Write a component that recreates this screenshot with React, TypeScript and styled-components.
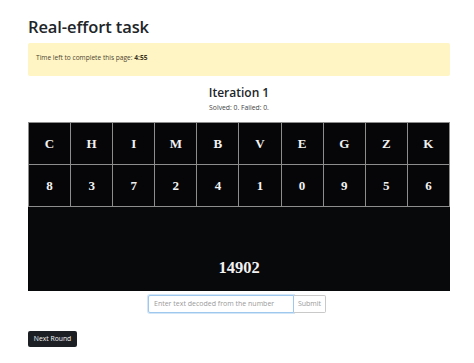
import React from "react";
import styled, { createGlobalStyle } from "styled-components";

const GlobalStyle = createGlobalStyle`
  body {
    margin: 0;
    padding: 0;
    background: #ffffff;
    font-family: "Open Sans", "Noto Sans", sans-serif;
    color: #212529;
  }
  * { box-sizing: border-box; }
`;

const Page = styled.div`
  width: 474px;
  height: 363px;
  padding: 16px 24px 0 28px;
  display: flex;
  flex-direction: column;
`;

const Title = styled.h1`
  margin: 0;
  font-size: 16.5px;
  font-weight: 600;
  line-height: 22px;
  letter-spacing: -0.1px;
`;

const Alert = styled.div`
  margin-top: 5px;
  height: 33px;
  background: #fff5c4;
  border-radius: 2px;
  padding: 0 8px 5px;
  display: flex;
  align-items: center;
  font-size: 6.6px;
  color: #4d4430;

  b {
    font-weight: 700;
    color: #3a3220;
  }
`;

const Heading = styled.h2`
  margin: 9px 0 0;
  text-align: center;
  font-size: 12px;
  font-weight: 600;
  line-height: 16px;
`;

const Stats = styled.div`
  margin-top: 2px;
  text-align: center;
  font-size: 6.8px;
  color: #444;
  line-height: 10px;
`;

const Table = styled.table`
  margin-top: 9px;
  width: 422px;
  border-collapse: collapse;
  background: #060608;
  table-layout: fixed;
  font-family: "Liberation Serif", "Times New Roman", serif;
  font-weight: 700;
  color: #f2f2f2;
`;

const Cell = styled.td`
  height: 42px;
  border: 1px solid #8d8d8d;
  text-align: center;
  vertical-align: middle;
  font-size: 13px;
  padding: 0;
`;

const CodeCell = styled.td`
  height: 84px;
  border-top: 1px solid #8d8d8d;
  text-align: center;
  vertical-align: bottom;
  padding: 0 0 13px;
  font-size: 16.5px;
  background: #08090b;
`;

const Form = styled.div`
  margin-top: 4px;
  display: flex;
  justify-content: center;
  padding-right: 4px;
`;

const Input = styled.input`
  width: 146px;
  height: 18px;
  border: 1px solid #9fc8ee;
  border-radius: 2px 0 0 2px;
  box-shadow: 0 0 0 1px #d3e6f8;
  padding: 0 5px;
  font-family: "Open Sans", sans-serif;
  font-size: 7px;
  outline: none;
  color: #333;

  &::placeholder {
    color: #9a9a9a;
  }
`;

const SubmitButton = styled.button`
  width: 32px;
  height: 18px;
  border: 1px solid #c9c9c9;
  border-left: none;
  border-radius: 0 2px 2px 0;
  background: #fff;
  color: #9a9a9a;
  font-family: "Open Sans", sans-serif;
  font-size: 7px;
  padding: 0;
`;

const NextButton = styled.button`
  margin-top: 18px;
  align-self: flex-start;
  width: 49px;
  height: 16px;
  border: none;
  border-radius: 2px;
  background: #1c1f24;
  color: #f4f4f4;
  font-family: "Open Sans", sans-serif;
  font-size: 6.8px;
  padding: 0;
`;

const letters = ["C", "H", "I", "M", "B", "V", "E", "G", "Z", "K"];
const digits = ["8", "3", "7", "2", "4", "1", "0", "9", "5", "6"];

export default function App() {
  return (
    <Page>
      <GlobalStyle />
      <Title>Real-effort task</Title>
      <Alert>
        <span>
          Time left to complete this page: <b>4:55</b>
        </span>
      </Alert>
      <Heading>Iteration 1</Heading>
      <Stats>Solved: 0. Failed: 0.</Stats>
      <Table>
        <tbody>
          <tr>
            {letters.map((l) => (
              <Cell key={l}>{l}</Cell>
            ))}
          </tr>
          <tr>
            {digits.map((d) => (
              <Cell key={d}>{d}</Cell>
            ))}
          </tr>
          <tr>
            <CodeCell colSpan={10}>14902</CodeCell>
          </tr>
        </tbody>
      </Table>
      <Form>
        <Input placeholder="Enter text decoded from the number" />
        <SubmitButton>Submit</SubmitButton>
      </Form>
      <NextButton>Next Round</NextButton>
    </Page>
  );
}
